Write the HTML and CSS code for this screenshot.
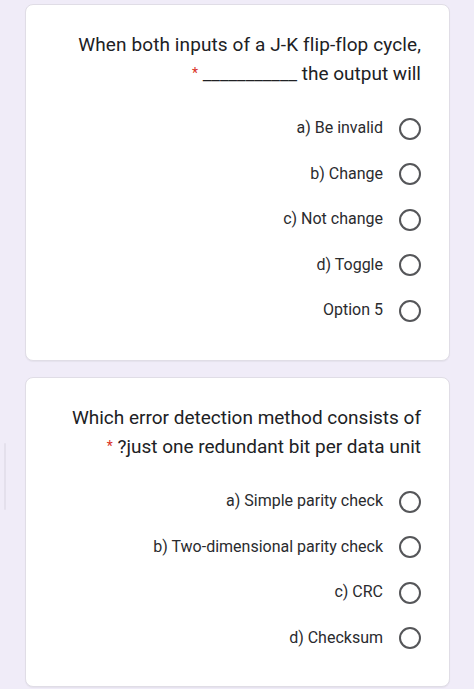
FILE: index.html
```html
<!DOCTYPE html>
<html lang="en">
<head>
<meta charset="utf-8">
<title>Quiz</title>
<link rel="stylesheet" href="styles.css">
</head>
<body>
<div class="scroll-hint"></div>
<main class="form">
  <section class="card card-first">
    <div class="question">
      <span class="line line-wide">When both inputs of a J-K flip-flop cycle,</span>
      <span class="line"><span class="req">*</span> ___________ the output will</span>
    </div>
    <ul class="options">
      <li class="option"><span class="label">a) Be invalid</span><span class="radio"></span></li>
      <li class="option"><span class="label">b) Change</span><span class="radio"></span></li>
      <li class="option"><span class="label">c) Not change</span><span class="radio"></span></li>
      <li class="option"><span class="label">d) Toggle</span><span class="radio"></span></li>
      <li class="option"><span class="label">Option 5</span><span class="radio"></span></li>
    </ul>
  </section>
  <section class="card">
    <div class="question">
      <span class="line">Which error detection method consists of</span>
      <span class="line"><span class="req">*</span> ?just one redundant bit per data unit</span>
    </div>
    <ul class="options">
      <li class="option"><span class="label">a) Simple parity check</span><span class="radio"></span></li>
      <li class="option"><span class="label">b) Two-dimensional parity check</span><span class="radio"></span></li>
      <li class="option"><span class="label">c) CRC</span><span class="radio"></span></li>
      <li class="option"><span class="label">d) Checksum</span><span class="radio"></span></li>
    </ul>
  </section>
</main>
</body>
</html>
```
FILE: styles.css
```css
html, body {
  margin: 0;
  padding: 0;
}
body {
  background: #f0ecf8;
  font-family: Roboto, "Liberation Sans", Arial, sans-serif;
  color: #202124;
  min-height: 689px;
}
.scroll-hint {
  position: absolute;
  left: 4px;
  top: 443px;
  width: 2px;
  height: 67px;
  background: #e4e0ec;
  border-radius: 1px;
}
.form {
  display: flex;
  flex-direction: column;
  gap: 16px;
  padding: 4px 24px 0 25px;
}
.card {
  background: #ffffff;
  border: 1px solid #e0dde6;
  border-radius: 8px;
  padding: 26px 28px 25px 20px;
  box-shadow: 0 1px 1px rgba(60, 64, 67, 0.06);
}
.card-first {
  padding-bottom: 27px;
}
.question {
  display: flex;
  flex-direction: column;
  align-items: flex-end;
  font-size: 19px;
  line-height: 28px;
  text-align: right;
  color: #202124;
  margin-bottom: 17.75px;
}
.line {
  white-space: nowrap;
}
.line-wide {
  letter-spacing: 0.1px;
}
.req {
  color: #d93025;
  font-size: 14px;
  vertical-align: 2px;
}
.options {
  list-style: none;
  margin: 0;
  padding: 0;
  display: flex;
  flex-direction: column;
}
.option {
  height: 45.5px;
  display: flex;
  justify-content: flex-end;
  align-items: center;
  gap: 16px;
}
.label {
  font-size: 16px;
  color: #2a2b2e;
  padding-bottom: 2px;
  white-space: nowrap;
}
.radio {
  width: 22px;
  height: 22px;
  box-sizing: border-box;
  border: 2px solid #555659;
  border-radius: 50%;
  flex: none;
}
```
